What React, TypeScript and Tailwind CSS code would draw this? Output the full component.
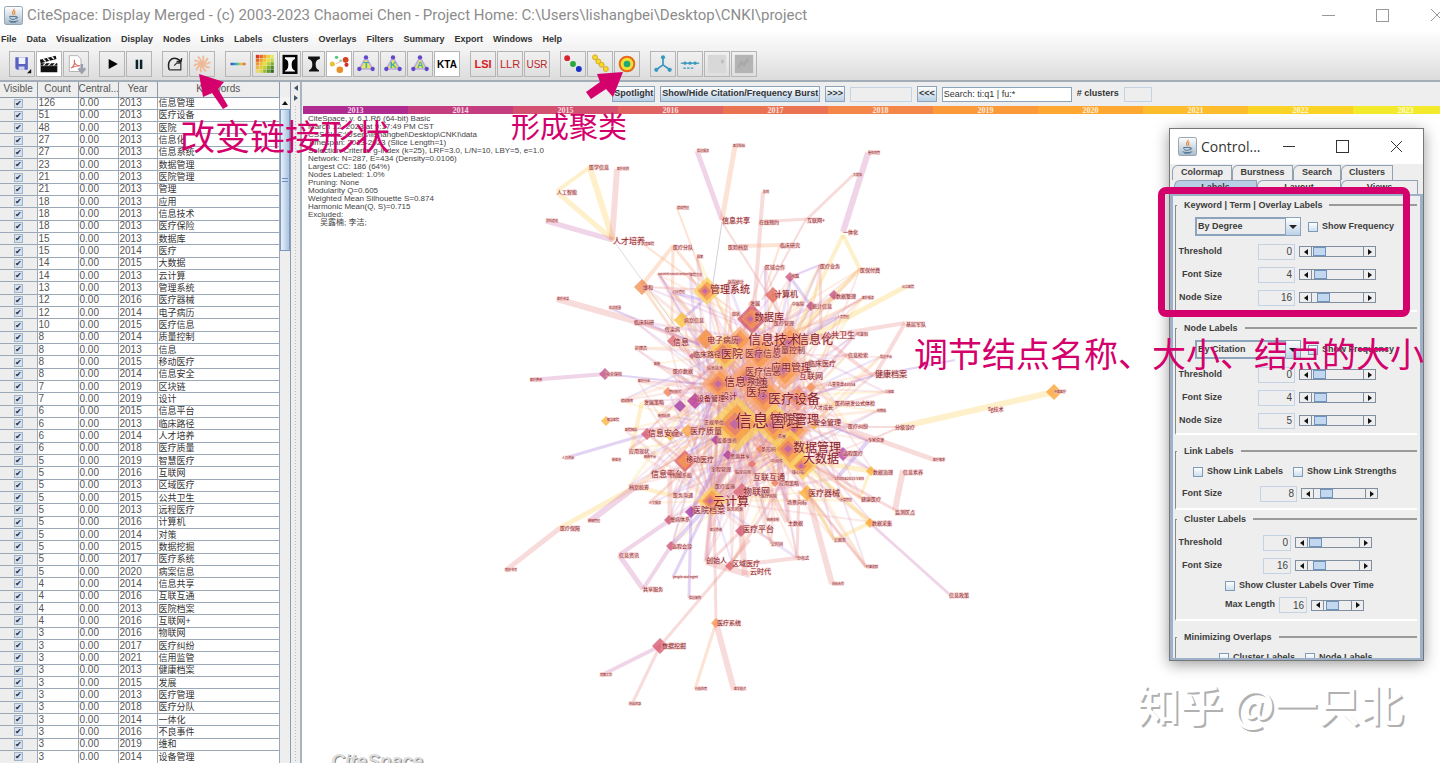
import type { ReactNode } from 'react';

const menus = [
  'File', 'Data', 'Visualization', 'Display', 'Nodes', 'Links', 'Labels', 'Clusters',
  'Overlays', 'Filters', 'Summary', 'Export', 'Windows', 'Help',
];

const keywords: [number, number, string][] = [
  [126, 2013, '信息管理'], [51, 2013, '医疗设备'], [48, 2013, '医院'], [27, 2013, '信息化'],
  [27, 2013, '信息系统'], [23, 2013, '数据管理'], [21, 2013, '医院管理'], [21, 2013, '管理'],
  [18, 2013, '应用'], [18, 2013, '信息技术'], [18, 2013, '医疗保险'], [15, 2013, '数据库'],
  [15, 2014, '医疗'], [14, 2015, '大数据'], [14, 2013, '云计算'], [13, 2013, '管理系统'],
  [12, 2016, '医疗器械'], [12, 2014, '电子病历'], [10, 2015, '医疗信息'], [8, 2014, '质量控制'],
  [8, 2013, '信息'], [8, 2015, '移动医疗'], [8, 2014, '信息安全'], [7, 2019, '区块链'],
  [7, 2019, '设计'], [6, 2015, '信息平台'], [6, 2013, '临床路径'], [6, 2014, '人才培养'],
  [6, 2018, '医疗质量'], [5, 2019, '智慧医疗'], [5, 2016, '互联网'], [5, 2013, '区域医疗'],
  [5, 2015, '公共卫生'], [5, 2013, '远程医疗'], [5, 2016, '计算机'], [5, 2014, '对策'],
  [5, 2015, '数据挖掘'], [5, 2017, '医疗系统'], [5, 2020, '病案信息'], [4, 2014, '信息共享'],
  [4, 2016, '互联互通'], [4, 2013, '医院档案'], [4, 2016, '互联网+'], [3, 2016, '物联网'],
  [3, 2017, '医疗纠纷'], [3, 2021, '信用监管'], [3, 2013, '健康档案'], [3, 2015, '发展'],
  [3, 2013, '医疗管理'], [3, 2018, '医疗分队'], [3, 2014, '一体化'], [3, 2016, '不良事件'],
  [3, 2019, '维和'], [3, 2014, '设备管理'],
];

const years = [
  { year: 2013, color: 'bg-[#b02b8f]' },
  { year: 2014, color: 'bg-[#c43e7f]' },
  { year: 2015, color: 'bg-[#d3506e]' },
  { year: 2016, color: 'bg-[#e06461]' },
  { year: 2017, color: 'bg-[#ea7354]' },
  { year: 2018, color: 'bg-[#f38648]' },
  { year: 2019, color: 'bg-[#fa9a3a]' },
  { year: 2020, color: 'bg-[#fea832]' },
  { year: 2021, color: 'bg-[#fdbc2c]' },
  { year: 2022, color: 'bg-[#fbd327]' },
  { year: 2023, color: 'bg-[#f2ea2a]' },
];

const summary = [
  'CiteSpace, v. 6.1.R6 (64-bit) Basic',
  'March 12, 2023 at 9:17:49 PM CST',
  'CSSCI: C:\\Users\\lishangbei\\Desktop\\CNKI\\data',
  'Timespan: 2013-2023 (Slice Length=1)',
  'Selection Criteria: g-index (k=25), LRF=3.0, L/N=10, LBY=5, e=1.0',
  'Network: N=287, E=434 (Density=0.0106)',
  'Largest CC: 186 (64%)',
  'Nodes Labeled: 1.0%',
  'Pruning: None',
  'Modularity Q=0.605',
  'Weighted Mean Silhouette S=0.874',
  'Harmonic Mean(Q, S)=0.715',
  'Excluded:',
];

/* ---------- network ---------- */

const Y = '#fbcf5a';
const O = '#f9a878';
const P = '#ea8f8f';
const M = '#cf7ab8';
const V = '#a777dd';

type Link = [number, number, number, number, number, string];
const links: Link[] = [
  [557, 191, 590, 167, 4, Y], [557, 192, 613, 240, 5, Y], [590, 168, 613, 240, 6, Y],
  [617, 169, 612, 240, 6, P], [546, 221, 613, 240, 5, M], [697, 151, 722, 220, 5, M],
  [735, 146, 722, 220, 5, O], [722, 222, 712, 290, 1, '#776688'], [722, 222, 790, 330, 2, P],
  [677, 208, 702, 275, 2, O], [673, 246, 642, 285, 4, O], [673, 246, 672, 325, 3, O],
  [673, 246, 707, 288, 3, O], [557, 299, 634, 321, 6, P], [634, 321, 720, 352, 3, P],
  [609, 308, 700, 345, 2, V], [660, 275, 684, 318, 2, V], [684, 318, 704, 300, 3, V],
  [672, 292, 702, 300, 3, V], [642, 287, 720, 290, 2, P], [642, 287, 700, 370, 2, O],
  [605, 374, 530, 380, 4, M], [605, 374, 720, 386, 2, V], [613, 240, 700, 360, 1, '#998899'],
  [643, 244, 760, 330, 2, O], [868, 153, 843, 232, 6, M], [853, 175, 805, 221, 3, P],
  [805, 221, 762, 300, 2, P], [763, 192, 754, 310, 4, P], [759, 222, 807, 219, 3, P],
  [738, 246, 780, 245, 4, O], [780, 245, 765, 290, 2, O], [843, 235, 795, 335, 4, Y],
  [843, 235, 860, 269, 4, Y], [860, 269, 795, 335, 4, Y], [820, 265, 821, 330, 3, P],
  [790, 277, 820, 265, 2, V], [790, 277, 811, 306, 3, V], [905, 287, 805, 340, 5, Y],
  [865, 298, 790, 335, 3, O], [840, 317, 800, 340, 2, V], [905, 323, 790, 342, 4, P],
  [905, 323, 875, 375, 4, P], [873, 376, 825, 340, 4, P], [873, 376, 780, 405, 2, V],
  [873, 376, 955, 360, 2, V], [647, 434, 565, 458, 3, V], [642, 402, 632, 448, 4, Y],
  [560, 528, 635, 487, 5, Y], [505, 571, 560, 528, 5, P], [590, 521, 635, 487, 6, M],
  [635, 487, 660, 470, 5, O], [660, 470, 715, 420, 4, O], [637, 487, 675, 496, 4, Y],
  [670, 473, 670, 520, 5, P], [670, 520, 619, 555, 4, M], [619, 555, 643, 589, 5, M],
  [643, 589, 671, 546, 4, M], [671, 546, 712, 501, 4, V], [673, 577, 740, 440, 3, V],
  [689, 598, 691, 512, 3, V], [691, 512, 736, 430, 4, V], [706, 562, 712, 501, 5, P],
  [706, 562, 750, 575, 6, P], [730, 566, 784, 480, 3, P], [716, 623, 714, 501, 3, P],
  [716, 623, 695, 689, 3, O], [716, 623, 734, 690, 6, P], [660, 646, 750, 540, 3, P],
  [660, 646, 602, 675, 4, M], [660, 646, 632, 704, 3, P], [1054, 392, 900, 427, 6, Y],
  [900, 427, 800, 427, 2, P], [868, 441, 900, 427, 2, P], [868, 441, 815, 420, 2, V],
  [868, 441, 838, 477, 4, V], [935, 460, 850, 430, 5, P], [870, 471, 805, 460, 5, Y],
  [870, 471, 860, 498, 3, Y], [903, 470, 895, 510, 6, P], [860, 498, 805, 460, 3, O],
  [895, 510, 805, 460, 3, P], [870, 523, 800, 460, 4, Y], [870, 523, 834, 540, 4, Y],
  [870, 523, 949, 594, 3, M], [835, 540, 807, 493, 3, Y], [866, 567, 807, 493, 3, P],
  [832, 584, 808, 495, 6, P], [741, 531, 745, 575, 6, P], [797, 558, 799, 490, 3, P],
  [797, 558, 755, 563, 4, P], [787, 522, 770, 490, 5, P], [775, 543, 755, 530, 2, O],
  [742, 492, 741, 531, 5, P], [741, 531, 712, 560, 3, P], [647, 434, 685, 461, 3, P],
  [685, 461, 736, 425, 2, O],
];

type Node = [number, number, number, string];
const nodes: Node[] = [
  [790, 343, 19, O], [740, 340, 14, O], [725, 352, 18, Y], [760, 354, 20, O], [785, 370, 20, O],
  [748, 378, 18, O], [765, 396, 22, O], [798, 398, 13, P], [720, 384, 19, O], [775, 425, 22, Y],
  [795, 430, 14, O], [737, 424, 28, Y], [803, 466, 14, Y],
  [790, 449, 20, Y], [707, 291, 14, Y], [752, 319, 15, '#cf4f6c'], [712, 501, 15, Y],
  [642, 287, 8, '#f08a4b'], [682, 320, 8, '#fbbd2c'], [773, 295, 8, '#e0604f'],
  [790, 277, 5, '#cd5075'], [811, 306, 5, '#c04a80'], [834, 295, 5, '#c04a80'],
  [673, 341, 6, '#d9606c'], [706, 339, 10, '#f08a4b'], [695, 401, 8, '#b02b8f'],
  [680, 406, 6, '#9b2a98'], [605, 374, 6, '#c04a80'], [668, 392, 5, '#f07a4b'],
  [606, 421, 5, '#fbb02c'], [647, 434, 6, '#d5506a'], [670, 436, 5, '#fbbd2c'],
  [688, 431, 7, '#f9a03a'], [716, 440, 5, '#a8329a'], [685, 461, 11, '#dc5a60'],
  [728, 455, 5, '#a8329a'], [843, 454, 7, '#b8409a'], [742, 492, 9, '#d9606c'],
  [691, 512, 6, '#a030a0'], [807, 493, 8, '#fba82c'], [871, 471, 5, '#fbb02c'],
  [870, 523, 5, '#faa52c'], [669, 520, 5, '#cf4f6c'], [671, 546, 5, '#cf4f6c'],
  [741, 531, 6, '#cf4f6c'], [730, 566, 5, '#dc5a60'], [716, 623, 5, '#f5944b'],
  [660, 646, 8, '#d5506a'], [1054, 392, 8, '#fba02c'], [814, 425, 5, '#fbb02c'],
  [775, 483, 4, '#ee7050'], [760, 449, 4, '#f0804b'], [811, 387, 5, '#f5904b'],
  [692, 356, 3, '#c04a80'], [670, 473, 4, '#d9607c'], [752, 464, 4, '#e97060'],
];

type Label = [number, number, string, number];
const labels: Label[] = [
  [589, 166, '医学信息', 5], [557, 191, '人工智能', 5], [617, 169, '医疗机构', 3], [546, 221, '学科建设', 3],
  [613, 240, '人才培养', 8], [642, 244, '大型医院', 3], [673, 246, '医疗分队', 5], [722, 220, '信息共享', 7],
  [697, 151, '信息服务', 3], [733, 146, '医学检验', 3], [677, 208, '健康管理', 3], [697, 257, '档案', 3],
  [658, 274, 'wavelet neural network', 3], [690, 275, '医院文化', 3], [643, 286, '维和', 5], [673, 292, '门诊管理', 3],
  [710, 288, '管理系统', 10], [557, 299, '医疗改革', 3], [609, 308, '生活质量', 3], [634, 321, '临床科研', 5],
  [684, 319, '病案信息', 5], [665, 328, '传染病', 5], [673, 341, '信息', 8], [707, 339, '电子病历', 8],
  [635, 348, '护理员', 4], [654, 364, '智能', 3], [606, 374, '社会保险', 4], [530, 380, '医疗费用', 3],
  [673, 370, '医疗数据', 5], [707, 368, '信息技术', 4], [638, 381, '医疗行业', 3], [728, 246, '医院档案', 5],
  [728, 282, '医院统计', 4], [732, 314, '现状', 4], [750, 302, '发展', 5], [754, 316, '数据库', 10],
  [763, 192, '协同', 3], [759, 221, '在线预约', 5], [807, 219, '互联网+', 5], [853, 175, '大健康', 3],
  [868, 153, '慢性病管', 3], [843, 231, '一体化', 5], [780, 244, '临床研究', 5], [765, 266, '区域合作', 5],
  [820, 265, '医疗业务', 5], [860, 269, '医保付费', 5], [791, 276, '问题', 4], [774, 293, '计算机', 8],
  [836, 295, '数据整理', 5], [792, 304, '中医院', 4], [812, 305, '统计信息', 5], [862, 298, '医疗服务', 3],
  [902, 287, '公立医院', 3], [774, 322, '医疗管理', 5], [837, 317, '人员管理', 3], [906, 323, '基层军队', 5],
  [748, 338, '信息技术', 13], [797, 338, '信息化', 12], [823, 334, '公共卫生', 8], [856, 334, '可复制', 4],
  [693, 354, '临床路径', 7], [721, 353, '医院', 11], [745, 353, '医疗信息', 9], [773, 349, '质量控制', 8],
  [848, 354, '信息检索', 5], [880, 357, '信息平台', 3], [745, 371, '医疗信息', 9], [771, 366, '应用管理', 10],
  [808, 363, '临床医疗', 7], [799, 375, '互联网', 8], [875, 373, '健康档案', 8], [724, 381, '信息系统', 11],
  [750, 381, '对策', 9], [746, 391, '医疗', 11], [768, 397, '医疗设备', 13], [828, 384, '儿童青盖4355a', 4],
  [721, 395, '设计', 8], [697, 398, '设备管理', 7], [644, 401, '发展策略', 5], [621, 401, '健康教育', 3],
  [669, 392, '管理模式', 3], [735, 419, '信息管理', 17], [771, 418, '医院管理', 12], [813, 406, '人才成长', 5],
  [835, 402, '医药研发公式体检', 5], [885, 392, '三级医', 3], [877, 411, '药物临', 3], [988, 408, '5g技术', 5],
  [1054, 392, '中医医疗', 3], [607, 420, '智慧医院', 3], [704, 421, '正规单位', 5], [690, 430, '医疗质量', 8],
  [648, 432, '信息安全', 8], [671, 434, '智能化', 4], [625, 430, '医院网站', 3], [658, 416, '疾病防控', 3],
  [717, 439, '设备维修', 5], [813, 422, '安全管理', 7], [848, 425, '医疗纠纷', 5], [895, 426, '分级诊疗', 5],
  [868, 440, '专家资源', 4], [778, 436, '质量', 4], [793, 446, '数据管理', 12], [803, 457, '大数据', 12],
  [843, 452, '远程医疗', 5], [933, 460, '医疗需求', 3], [873, 471, '数据治理', 5], [903, 471, '信息素养', 5],
  [686, 459, '移动医疗', 7], [730, 455, '资源共享', 5], [761, 448, '条形码', 5], [771, 461, '中间件', 4],
  [629, 450, '应用现状', 5], [612, 460, '新医改', 3], [644, 457, '网络平台', 3], [562, 458, '人力资源', 3],
  [651, 473, '信息平台', 8], [672, 474, '智能系统', 5], [711, 468, '全程管理', 5], [735, 472, '临床应用', 4],
  [753, 476, '互联互通', 8], [792, 472, '核心站', 4], [779, 482, '应用策略', 5], [835, 478, 'chima2015 vsm', 4],
  [629, 486, '档案统筹', 5], [715, 485, '医疗设施', 5], [743, 491, '物联网', 9], [713, 500, '云计算', 12],
  [808, 492, '医疗器械', 8], [761, 496, '医疗风险', 4], [787, 501, '场景向标', 5], [840, 500, '分类管理', 3],
  [861, 498, '健康医疗', 5], [895, 511, '监测区点', 5], [673, 494, '医务沟通', 5], [649, 503, '人文服务', 3],
  [693, 509, '医院档案', 8], [727, 509, '医务档案', 4], [588, 521, '精细管理', 3], [560, 527, '医疗保障', 5],
  [505, 570, '病历书写', 3], [670, 518, '慢病体系', 5], [710, 530, '医学影像', 3], [742, 528, '医疗平台', 8],
  [767, 520, '网络系统', 3], [788, 522, '主数据', 5], [872, 522, '数据采集', 5], [672, 545, '远程会诊', 5],
  [619, 554, '信息资讯', 5], [706, 560, '创始人', 7], [732, 563, '区域医疗', 7], [750, 571, '云时代', 7],
  [771, 544, '云时间', 4], [797, 558, '分布式', 4], [834, 540, '云服务', 4], [866, 567, '时事追踪', 3],
  [832, 584, '国际合作', 3], [949, 594, '信息政策', 5], [673, 577, 'people and mgmt', 3], [643, 588, '共享服务', 5],
  [689, 598, '信息架构', 3], [717, 622, '医疗系统', 6], [662, 645, '数据挖掘', 6], [600, 675, '病案工作', 3],
  [629, 704, '药品目录', 3], [695, 689, '行政处罚', 3], [734, 689, '医学模式', 3],
];

const hubs = [[737, 424], [790, 345], [765, 396], [790, 449], [720, 384], [712, 501], [725, 352], [775, 425]];
const webTones = [P, O, M, Y, P, V, P];

const diamond = (x: number, y: number, r: number) => `${x},${y - r} ${x + r},${y} ${x},${y + r} ${x - r},${y}`;

const Network = () => {
  const inner = labels.filter(([x, y]) => x > 620 && x < 890 && y > 255 && y < 570);
  return (
    <svg className="block h-[649px] w-[1138px]" viewBox="302 114 1138 649" role="img" aria-label="Keyword network">
      <g strokeOpacity="0.2">
        {inner.map(([x, y], i) =>
          [0, 3, 5, 6].map((k) => {
            const [hx, hy] = hubs[(i + k) % hubs.length];
            return (
              <line key={`${i}-${k}`} x1={x} y1={y} x2={hx} y2={hy} stroke={webTones[(i + k) % 7]} strokeWidth={k === 3 ? 3 : 2} />
            );
          }),
        )}
      </g>
      <g strokeOpacity="0.32">
        {links.map(([x1, y1, x2, y2, w, c], i) => (
          <line key={i} x1={x1} y1={y1} x2={x2} y2={y2} stroke={c} strokeWidth={w} />
        ))}
      </g>
      {nodes.map(([x, y, r, c], i) => (
        <g key={i} fillOpacity="0.75">
          <polygon points={diamond(x, y, r)} fill={c} />
          {r > 9 && <polygon points={diamond(x, y, r * 0.7)} fill="#f79a48" />}
          {r > 11 && <polygon points={diamond(x - 2, y, r * 0.42)} fill="#e27a72" />}
          {r > 11 && <polygon points={diamond(x - 2, y, r * 0.2)} fill="#b860b8" />}
        </g>
      ))}
      <g
        fill="#861f2c"
        stroke="#f6c3c0"
        strokeOpacity="0.7"
        strokeWidth="1"
        paintOrder="stroke"
        dominantBaseline="central"
        className="font-['Noto_Sans_CJK_SC',sans-serif]"
      >
        {labels.map(([x, y, text, size], i) => (
          <text key={i} x={x} y={y} fontSize={size}>
            {text}
          </text>
        ))}
      </g>
    </svg>
  );
};

/* ---------- toolbar ---------- */

const JavaIcon = () => (
  <svg viewBox="0 0 20 20" className="size-[19px] shrink-0">
    <defs>
      <linearGradient id="java" x1="0" y1="0" x2="0" y2="1">
        <stop offset="0" stopColor="#fff" />
        <stop offset="1" stopColor="#a9bccb" />
      </linearGradient>
    </defs>
    <rect x="0.5" y="0.5" width="19" height="19" rx="2" fill="url(#java)" stroke="#8fa0ae" />
    <path d="M10.500 3c1 2-2.500 3-1.500 4.500.5 1 1 1.200.5 2.200M12 5.500c-1.500 1-1.500 2 0 3.500" fill="none" stroke="#e08a3a" strokeWidth="1.200" />
    <path d="M6 11h7c0 2-1 3-3.500 3S6 13 6 11zM13 11.500c2-.5 2 1.500-.5 2M5 15.500c3 1.200 7 1.200 10 0M6.500 17h6" fill="none" stroke="#4d7191" />
  </svg>
);

const Glyph = ({ children }: { children: ReactNode }) => (
  <svg viewBox="0 0 24 24" className="size-[20px] shrink-0">
    {children}
  </svg>
);

const swatches = [
  ['#d83828', '#e86828', '#f0a028', '#f0d030', '#e8e860'],
  ['#e86828', '#f0a028', '#f0c828', '#e8e040', '#c8d840'],
  ['#f09838', '#f0c030', '#e8e030', '#b8d038', '#88b030'],
  ['#f0b848', '#e8d030', '#c0d030', '#88b030', '#509028'],
  ['#f0d868', '#d8d840', '#98b838', '#609830', '#386820'],
];

const Triad = ({ letter }: { letter: string }) => (
  <Glyph>
    <path d="M12 4L4 18h16z" fill="#e8e850" stroke="#b9a8e8" strokeWidth="2" />
    <text x="12" y="17" textAnchor="middle" fontSize="11" fontWeight="700" fill="#38a8b8">{letter}</text>
    <circle cx="12" cy="4" r="2.600" fill="#6048c8" />
    <circle cx="4" cy="18" r="2.600" fill="#6048c8" />
    <circle cx="20" cy="18" r="2.600" fill="#6048c8" />
  </Glyph>
);

type Tool = { name: string; icon: ReactNode; width?: string; bg?: string };

const toolGroups: Tool[][] = [
  [
    {
      name: 'Save',
      icon: (
        <Glyph>
          <path d="M4 4h15v15H6l-2-2z" fill="#5a62c0" />
          <path d="M8 4h8v8H8z" fill="#f0f2ff" />
          <path d="M8 15h7v4H8z" fill="#d0d4ee" />
          <path d="M23 18v5h-5z" fill="#111" />
        </Glyph>
      ),
    },
    {
      name: 'Record',
      bg: 'bg-white',
      icon: (
        <Glyph>
          <path d="M1 7l19-5 1 4L2 11zM2 11h20v11H2z" fill="#111" />
          <path d="M5 6l3 3M10 5l3 3M15 3l3 3M5 14l3-3M11 14l3-3M17 14l3-3" stroke="#fff" strokeWidth="1.500" />
          <path d="M2 14h20" stroke="#aaa" strokeWidth="0.800" />
        </Glyph>
      ),
    },
    {
      name: 'Export PDF',
      icon: (
        <Glyph>
          <path d="M4 2h10l4 4v15H4z" fill="#fff" stroke="#a8a8a8" />
          <path d="M6 17c3-2 5-6 4-10-1 5 3 7 7 7-4 0-8 1-11 3z" fill="none" stroke="#d86a66" strokeWidth="1.300" />
          <path d="M19 12v9M15 17l4 5 4-5" fill="none" stroke="#9a9faa" strokeWidth="3" />
        </Glyph>
      ),
    },
  ],
  [
    { name: 'Play', icon: <Glyph><path d="M8 6l11 6-11 6z" fill="#050505" /></Glyph> },
    { name: 'Pause', icon: <Glyph><path d="M8 7h3v11H8zM13 7h3v11h-3z" fill="#06222c" /></Glyph> },
  ],
  [
    {
      name: 'Redraw',
      icon: (
        <Glyph>
          <path d="M5 19C2 9 8 3 15 6c2 1 4 3 4 4l1-5M19 10l-5-1" fill="none" stroke="#222" strokeWidth="1.800" />
          <path d="M5 19h14v-8h-5l-3 3" fill="none" stroke="#333" strokeWidth="1.500" />
        </Glyph>
      ),
    },
    {
      name: 'Link Shape',
      icon: (
        <Glyph>
          {[0, 36, 72, 108, 144, 180, 216, 252, 288, 324].map((a) => (
            <path key={a} d="M12 12c1-3 3-6 1-10" fill="none" stroke="#efb995" strokeWidth="2" transform={`rotate(${a} 12 12)`} />
          ))}
        </Glyph>
      ),
    },
  ],
  [
    {
      name: 'Spectrum',
      icon: (
        <Glyph>
          <defs>
            <linearGradient id="spectrum">
              <stop offset="0" stopColor="#4048c8" />
              <stop offset="0.4" stopColor="#30b8b0" />
              <stop offset="0.7" stopColor="#e8c838" />
              <stop offset="1" stopColor="#e05840" />
            </linearGradient>
          </defs>
          <path d="M3 10.500h18v3H3z" fill="url(#spectrum)" />
        </Glyph>
      ),
    },
    {
      name: 'Color Grid',
      icon: (
        <Glyph>
          {swatches.map((row, r) =>
            row.map((c, i) => <rect key={`${r}${i}`} x={1 + i * 4.4} y={1 + r * 4.4} width="4" height="4" fill={c} />),
          )}
        </Glyph>
      ),
    },
    {
      name: 'Background',
      width: 'w-[22px]',
      icon: (
        <Glyph>
          <path d="M3 1h18v23H3z" fill="#050505" />
          <path d="M6 4h12v2c-3 1-4 3-4 6.500S15 19 18 20v1H6v-1c3-1 4-3.500 4-7.500S9 7 6 6z" fill="#fff" />
        </Glyph>
      ),
    },
    {
      name: 'Foreground',
      width: 'w-[23px]',
      icon: <Glyph><path d="M5 3h14v3c-4 1-5 3-5 6.500s1 5.500 4 7V21H6v-1.500c3-1.500 4-3.500 4-7S9 7 5 6z" fill="#111" /></Glyph>,
    },
    {
      name: 'Nodes',
      bg: 'bg-white',
      icon: (
        <Glyph>
          <circle cx="4" cy="12" r="3" fill="#e8c038" />
          <circle cx="9" cy="4" r="2" fill="#50c878" />
          <circle cx="20" cy="7" r="3.500" fill="#d84020" />
          <circle cx="21" cy="13" r="2.500" fill="#d03030" />
          <circle cx="13" cy="19" r="4" fill="#e89028" />
          <circle cx="14" cy="8" r="1.500" fill="#70d0a0" />
          <path d="M8 12l8-4" stroke="#e0b0a0" />
        </Glyph>
      ),
    },
    { name: 'Label T', icon: <Triad letter="T" /> },
    { name: 'Label K', icon: <Triad letter="K" /> },
    { name: 'Label A', icon: <Triad letter="A" /> },
    { name: 'KTA', bg: 'bg-white', icon: <span className="text-[10px] font-bold text-black">KTA</span> },
  ],
  [
    { name: 'LSI', icon: <span className="text-[11px] font-bold text-[#d82020]">LSI</span> },
    { name: 'LLR', icon: <span className="text-[11px] text-[#c02828]">LLR</span> },
    { name: 'USR', icon: <span className="text-[10px] text-[#b82828]">USR</span> },
  ],
  [
    {
      name: 'Color Nodes',
      icon: (
        <Glyph>
          <circle cx="5" cy="5" r="3.500" fill="#d82030" />
          <circle cx="12" cy="12" r="3.500" fill="#28a838" />
          <circle cx="19" cy="18" r="3.500" fill="#1830c8" />
        </Glyph>
      ),
    },
    {
      name: 'Yellow Nodes',
      icon: (
        <Glyph>
          {[[6, 4], [10, 9], [14, 13], [19, 18]].map(([x, y]) => (
            <circle key={x} cx={x} cy={y} r="3" fill="#f8d828" stroke="#d0a020" />
          ))}
        </Glyph>
      ),
    },
    {
      name: 'Cluster',
      icon: (
        <Glyph>
          <circle cx="12" cy="12" r="10" fill="#e86820" />
          <circle cx="12" cy="12" r="7.500" fill="#f0e030" />
          <circle cx="12" cy="12" r="4" fill="#20a878" />
        </Glyph>
      ),
    },
  ],
  [
    {
      name: 'Tree',
      icon: (
        <Glyph>
          <path d="M12 5v8L5 18M12 13l7 5" fill="none" stroke="#3898c0" strokeWidth="2" />
          <circle cx="12" cy="4" r="2.500" fill="#3898c0" />
          <circle cx="4" cy="19" r="2.500" fill="#3898c0" />
          <circle cx="20" cy="19" r="2.500" fill="#3898c0" />
        </Glyph>
      ),
    },
    {
      name: 'Timeline',
      icon: (
        <Glyph>
          <path d="M1 11h22" stroke="#3898c0" strokeWidth="1.500" />
          <path d="M4 17h12" stroke="#3898c0" strokeWidth="1.500" strokeDasharray="3 1.500" />
          <circle cx="6" cy="11" r="2" fill="#3898c0" />
          <circle cx="12" cy="11" r="2" fill="#3898c0" />
          <circle cx="18" cy="11" r="2" fill="#3898c0" />
        </Glyph>
      ),
    },
    { name: 'Map', icon: <Glyph><path d="M1 1h22v22H1z" fill="#d8d8d8" /><path d="M17 7h3v4h-3zM12 16h4" fill="#bbb" /></Glyph> },
    { name: 'Density', icon: <Glyph><path d="M1 1h22v22H1z" fill="#b4b4b4" /><path d="M5 16l4-6 3 3 5-7" stroke="#a8a8a8" strokeWidth="3" fill="none" /></Glyph> },
  ],
];

const Toolbar = () => (
  <div className="flex h-[34px] shrink-0 items-center gap-[10px] border-b-2 border-[#a3adb8] bg-linear-to-b from-[#f4f4f4] to-[#dcdcdc] pl-[9px]">
    {toolGroups.map((group, g) => (
      <div key={g} className="flex gap-px">
        {group.map(({ name, icon, width = 'w-[26px]', bg = '' }) => (
          <button key={name} aria-label={name} className={`flex h-[26px] ${width} items-center justify-center overflow-hidden border border-[#b5b5b5] ${bg}`}>
            {icon}
          </button>
        ))}
      </div>
    ))}
  </div>
);

/* ---------- keyword table ---------- */

const KeywordTable = () => (
  <div className="flex w-[291px] shrink-0 overflow-hidden border-r border-[#8c9bab]">
    <table className="h-[682px] w-[280px] table-fixed border-collapse text-[10px] leading-[10px] text-[#555]">
      <colgroup>
        <col className="w-[37px]" />
        <col className="w-[41px]" />
        <col className="w-[40px]" />
        <col className="w-[39px]" />
        <col />
      </colgroup>
      <thead>
        <tr className="h-[15px] bg-[#eee]">
          {['Visible', 'Count', 'Central...', 'Year', 'Keywords'].map((h) => (
            <th key={h} className="overflow-hidden border-r border-b border-[#8c9bab] p-0 font-normal whitespace-nowrap">
              {h}
            </th>
          ))}
        </tr>
      </thead>
      <tbody>
        {keywords.map(([count, year, word]) => (
          <tr key={word}>
            <td className="border-r border-b border-[#9aa8b8] bg-[#eee] p-0 text-center">
              <input
                type="checkbox"
                defaultChecked
                aria-label={word}
                className="mx-auto block size-[9px] appearance-none border border-[#9fb4c8] bg-[#d5e2ee] text-[8px] leading-[7px] text-[#1c2c48] before:content-['✔']"
              />
            </td>
            <td className="border-r border-b border-[#9aa8b8] p-0 pl-px">{count}</td>
            <td className="border-r border-b border-[#9aa8b8] p-0 pl-px">0.00</td>
            <td className="border-r border-b border-[#9aa8b8] p-0 pl-px">{year}</td>
            <td className="border-r border-b border-[#9aa8b8] p-0 pl-px text-[9px] text-[#333]">{word}</td>
          </tr>
        ))}
      </tbody>
    </table>
    <div className="flex flex-1 flex-col bg-[#eee]">
      <div className="h-[15px]" />
      <button aria-label="Scroll up" className="flex h-[12px] items-center justify-center bg-[#f4f4f4]">
        <svg viewBox="0 0 6 4" className="h-1 w-1.5"><path d="M0 4l3-4 3 4z" fill="#111" /></svg>
      </button>
      <div className="flex h-[142px] items-center justify-center border border-[#7a98c0] bg-linear-to-r from-[#e8f1fa] to-[#aac4e0]">
        <div className="h-1 w-1.5 border-y border-[#6c8fbd]" />
      </div>
    </div>
  </div>
);

/* ---------- control panel ---------- */

interface ScrollerProps {
  label: string;
  value: number;
  pos: number;
  track: string;
  field: string;
}

const Scroller = ({ label, value, pos, track, field }: ScrollerProps) => (
  <>
    <input
      aria-label={label}
      defaultValue={value}
      className={`h-[16px] ${field} border border-[#c3d3e3] bg-[#eee] pr-[2px] text-right text-[10px] font-normal text-[#444]`}
    />
    <div className="ml-1 flex h-[11px] border border-[#7f8f9f]">
      <button aria-label={`${label} down`} className="flex w-[11px] items-center justify-center">
        <svg viewBox="0 0 4 6" className="h-1.5 w-1"><path d="M4 0L0 3l4 3z" fill="#111" /></svg>
      </button>
      <input
        type="range"
        aria-label={`${label} slider`}
        defaultValue={pos}
        className={`h-full ${track} appearance-none border-x border-[#7f8f9f] bg-[#eee] [&::-webkit-slider-thumb]:h-[9px] [&::-webkit-slider-thumb]:w-[13px] [&::-webkit-slider-thumb]:appearance-none [&::-webkit-slider-thumb]:border [&::-webkit-slider-thumb]:border-[#6d92c4] [&::-webkit-slider-thumb]:bg-[#c3d8ee]`}
      />
      <button aria-label={`${label} up`} className="flex w-[11px] items-center justify-center">
        <svg viewBox="0 0 4 6" className="h-1.5 w-1"><path d="M0 0l4 3-4 3z" fill="#111" /></svg>
      </button>
    </div>
  </>
);

interface RowProps {
  label: string;
  value: number;
  pos: number;
  gap?: string;
  field?: string;
}

const Row = ({ label, value, pos, gap = 'ml-[36px]', field = 'w-[37px]' }: RowProps) => (
  <div className="flex h-[23px] items-center">
    <span className="w-[46px] text-right">{label}</span>
    <div className={`${gap} flex items-center`}>
      <Scroller label={label} value={value} pos={pos} track="w-[53px]" field={field} />
    </div>
  </div>
);

const Check = ({ children }: { children: ReactNode }) => (
  <label className="flex items-center gap-1 whitespace-nowrap">
    <input type="checkbox" className="size-[10px] appearance-none border border-[#7d9ab8] bg-linear-to-b from-white to-[#cddfee]" />
    {children}
  </label>
);

const Group = ({ title, children, height }: { title: string; children?: ReactNode; height: string }) => (
  <section className={`${height} shrink-0`}>
    <h3 className="flex h-[10px] items-center gap-[7px] leading-[10px]">
      <span className="h-px w-[2px] bg-[#8a8a8a]" />
      {title}
      <span className="h-[2px] flex-1 bg-[#9a9a9a]" />
    </h3>
    <div className="-mt-[5px] h-[calc(100%-5px)] border-b-2 border-l border-b-white border-l-[#8a8a8a] pt-3">{children}</div>
  </section>
);

const Picker = ({ value }: { value: string }) => (
  <div className="mb-1 ml-[19px] flex items-center gap-[7px]">
    <div className="relative">
      <select aria-label="Label mode" className="h-[19px] w-[106px] appearance-none border-2 border-[#8ba3bb] bg-[#eee] pl-px text-[9px] font-bold">
        <option>{value}</option>
      </select>
      <span className="pointer-events-none absolute inset-y-0 right-0 flex w-[16px] items-center justify-center border border-[#8ba3bb] bg-linear-to-b from-white to-[#bcd2e8]">
        <svg viewBox="0 0 8 4" className="h-1 w-2"><path d="M0 0h8L4 4z" fill="#222" /></svg>
      </span>
    </div>
    <Check>Show Frequency</Check>
  </div>
);

const ControlPanel = () => (
  <aside className="absolute top-[128px] left-[1169px] flex h-[533px] w-[255px] flex-col overflow-hidden border border-[#777] bg-[#eee] text-[9px] font-bold text-[#3c3c3c] shadow-[0_3px_14px_rgba(0,0,0,0.4)]">
    <header className="flex h-[35px] shrink-0 items-center bg-white pr-5 pl-2">
      <JavaIcon />
      <h2 className="ml-1 flex-1 font-['Open_Sans',sans-serif] text-[14px] font-normal text-[#333]">Control...</h2>
      <div className="flex items-center gap-[41px]">
        <button aria-label="Minimize panel" className="h-px w-[12px] bg-[#333]" />
        <button aria-label="Maximize panel" className="size-[13px] border border-[#333]" />
        <button aria-label="Close panel">
          <svg viewBox="0 0 13 13" className="size-[13px]"><path d="M1 1l11 11M12 1L1 12" stroke="#333" /></svg>
        </button>
      </div>
    </header>
    <nav className="shrink-0 pt-px pl-[2px]">
      <div className="flex h-[15px]">
        {[['Colormap', 'w-[60px]'], ['Burstness', 'w-[61px]'], ['Search', 'w-[48px]'], ['Clusters', 'w-[52px]']].map(([t, w]) => (
          <button key={t} className={`${w} rounded-tl-md border border-b-0 border-[#8fa1b3]`}>{t}</button>
        ))}
      </div>
      <div className="flex h-[14px] pl-[2px]">
        {[['Labels', 'w-[83px] bg-[#b8cfe5]'], ['Layout', 'w-[84px]'], ['Views', 'w-[77px]']].map(([t, w]) => (
          <button key={t} className={`${w} rounded-tl-md border border-b-0 border-[#8fa1b3]`}>{t}</button>
        ))}
      </div>
    </nav>
    <div className="flex min-h-0 flex-1 flex-col overflow-hidden border-x-[3px] border-y-2 border-[#9db2c9] pt-1">
      <div className="flex flex-col pr-[3px] pl-[2px]">
        <Group title="Keyword | Term | Overlay Labels" height="h-[112px]">
          <Picker value="By Degree" />
          <Row label="Threshold" value={0} pos={2} />
          <Row label="Font Size" value={4} pos={4} />
          <Row label="Node Size" value={16} pos={14} />
        </Group>
        <div className="h-[11px]" />
        <Group title="Node Labels" height="h-[112px]">
          <Picker value="By Citation" />
          <Row label="Threshold" value={0} pos={2} />
          <Row label="Font Size" value={4} pos={4} />
          <Row label="Node Size" value={5} pos={5} />
        </Group>
        <div className="h-[11px]" />
        <Group title="Link Labels" height="h-[64px]">
          <div className="mt-[2px] mb-1 ml-[17px] flex h-[13px] items-center gap-[10px]">
            <Check>Show Link Labels</Check>
            <Check>Show Link Strengths</Check>
          </div>
          <Row label="Font Size" value={8} pos={15} gap="ml-[38px]" />
        </Group>
        <div className="h-1" />
        <Group title="Cluster Labels" height="h-[107px]">
          <Row label="Threshold" value={0} pos={2} gap="ml-[41px]" field="w-[28px]" />
          <Row label="Font Size" value={16} pos={14} gap="ml-[41px]" field="w-[28px]" />
          <div className="flex h-[18px] items-center pl-[49px]">
            <Check>Show Cluster Labels Over Time</Check>
          </div>
          <div className="flex h-[20px] items-center pl-[49px]">
            <span className="mr-1">Max Length</span>
            <Scroller label="Max Length" value={16} pos={14} track="w-[29px]" field="w-[28px]" />
          </div>
        </Group>
        <div className="h-[11px]" />
        <Group title="Minimizing Overlaps" height="h-[60px]">
          <div className="mt-[2px] ml-[43px] flex h-[13px] items-center gap-[10px]">
            <Check>Cluster Labels</Check>
            <Check>Node Labels</Check>
          </div>
        </Group>
      </div>
    </div>
  </aside>
);

/* ---------- tutorial notes drawn over the window ---------- */

const Annotations = () => (
  <div className="pointer-events-none absolute inset-0 overflow-hidden font-['Noto_Sans_CJK_SC',sans-serif] whitespace-nowrap text-[#d4006c]">
    <svg viewBox="0 0 660 120" className="absolute top-0 left-0 h-[120px] w-[660px]" fill="#d4006c">
      <path d="M199 74l25 8-6 7 10 17-5 3-11-16-9 4z" />
      <path d="M623 72l-26 2 3 8-14 10 5 7 15-10 7 8z" />
    </svg>
    <p className="absolute top-[109px] left-[180px] text-[35px] leading-[52px]">改变链接形状</p>
    <p className="absolute top-[103px] left-[511px] text-[29px] leading-[44px]">形成聚类</p>
    <div className="absolute top-[187px] left-[1158px] h-[130px] w-[252px] rounded-lg border-[7px] border-[#d4006c]" />
    <p className="absolute top-[328px] left-[914px] text-[34px] leading-[50px]">调节结点名称、大小、结点的大小</p>
    <p className="absolute top-[671px] left-[1137px] text-[43px] leading-[64px] font-medium text-white [text-shadow:2px_2px_0_#b0b0b0]">知乎 @一只北</p>
  </div>
);

const App = () => (
  <div className="relative flex h-screen flex-col overflow-hidden bg-white font-['Liberation_Sans','Noto_Sans_CJK_SC',sans-serif]">
    <header className="flex h-[30px] shrink-0 items-center overflow-hidden pl-1">
      <JavaIcon />
      <h1 className="ml-1 flex-1 font-['Roboto',sans-serif] text-[15px] whitespace-nowrap text-[#8c8c8c]">
        CiteSpace: Display Merged - (c) 2003-2023 Chaomei Chen - Project Home: C:\Users\lishangbei\Desktop\CNKI\project
      </h1>
      <div className="-mr-1 flex items-center gap-[41px]">
        <button aria-label="Minimize" className="h-px w-[13px] bg-[#999]" />
        <button aria-label="Maximize" className="size-[13px] border border-[#999]" />
        <button aria-label="Close">
          <svg viewBox="0 0 14 14" className="size-[14px]"><path d="M1 1l12 12M13 1L1 13" stroke="#999" /></svg>
        </button>
      </div>
    </header>
    <nav className="flex h-[18px] shrink-0 items-center gap-[10px] bg-linear-to-b from-white to-[#f2f2f2] pt-[2px] pl-px text-[9px] font-bold text-[#333]">
      {menus.map((m) => (
        <button key={m}>{m}</button>
      ))}
    </nav>
    <Toolbar />
    <div className="flex min-h-0 flex-1">
      <KeywordTable />
      <div className="flex w-[11px] shrink-0 flex-col items-center gap-1 border-r-2 border-[#a9b4c2] bg-[#eee] pt-[3px]">
        <svg viewBox="0 0 4 6" className="h-1.5 w-1"><path d="M4 0L0 3l4 3z" fill="#456" /></svg>
        <svg viewBox="0 0 4 6" className="h-1.5 w-1"><path d="M0 0l4 3-4 3z" fill="#456" /></svg>
        <div className="w-[3px] flex-1 bg-[radial-gradient(#bbb_1px,transparent_1px)] bg-size-[3px_3px]" />
      </div>
      <main className="relative min-w-0 flex-1 overflow-hidden">
        <div className="flex h-[24px] items-center justify-center gap-[5px] bg-[#eee] pl-[22px] text-[9px] font-bold text-[#333]">
          {['Spotlight', 'Show/Hide Citation/Frequency Burst', '>>>'].map((t) => (
            <button key={t} className="h-[16px] border border-[#8ba3bb] bg-linear-to-b from-white to-[#b8cfe5] px-px whitespace-nowrap">{t}</button>
          ))}
          <input aria-label="Burst" className="h-[15px] w-[62px] border border-[#c3d3e3]" />
          <button className="h-[16px] border border-[#8ba3bb] bg-linear-to-b from-white to-[#b8cfe5] px-px">&lt;&lt;&lt;</button>
          <input aria-label="Search" defaultValue="Search: ti:q1 | fu:*" className="h-[15px] w-[130px] border border-[#8ba3bb] bg-white px-px text-[9px] font-normal" />
          <label htmlFor="clusters"># clusters</label>
          <input id="clusters" className="h-[15px] w-[28px] border border-[#c3d3e3]" />
        </div>
        <div className="ml-px flex h-[8px] overflow-hidden">
          {years.map(({ year, color }) => (
            <div key={year} className={`${color} w-[105px] shrink-0 text-center font-['Liberation_Serif',serif] text-[8px] leading-[9px] font-bold text-white/80`}>
              {year}
            </div>
          ))}
        </div>
        <Network />
        <div className="absolute top-[33px] left-[6px] text-[8px] leading-[8px] whitespace-nowrap text-[#444]">
          {summary.map((line) => (
            <p key={line}>{line}</p>
          ))}
          <p className="pl-3">吴露楠; 李洁;</p>
        </div>
        <p className="absolute -bottom-[10px] left-[29px] text-[19px] leading-[24px] font-bold text-[#ddd] italic [text-shadow:1px_1px_0_#888]">CiteSpace</p>
      </main>
    </div>
    <ControlPanel />
    <Annotations />
  </div>
);

export default App;
